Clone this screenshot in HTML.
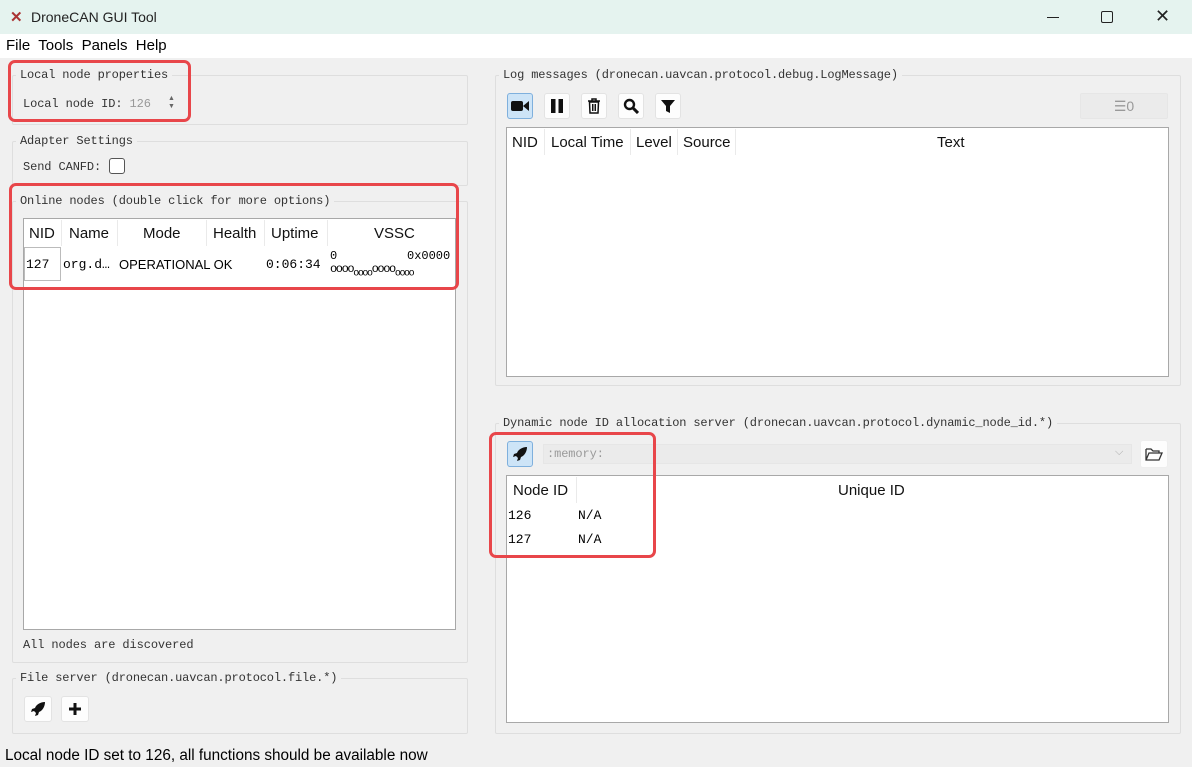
<!DOCTYPE html>
<html><head><meta charset="utf-8"><style>
*{box-sizing:border-box;margin:0;padding:0}
body{width:1192px;height:767px;background:#f0f0f0;position:relative;overflow:hidden;font-family:"Liberation Sans",sans-serif;color:#000}
.a{position:absolute}
.mono{font-family:"Liberation Mono","DejaVu Sans Mono",monospace;font-size:12px;letter-spacing:-0.1px;color:#333}
.grp{position:absolute;border:1px solid #dedede;border-radius:2px}
.gt{position:absolute;background:#f0f0f0;padding:0 4px;font-family:"Liberation Mono",monospace;font-size:12px;letter-spacing:-0.15px;color:#333;white-space:nowrap}
.tbl{position:absolute;background:#fff;border:1px solid #a8a8a8}
.hd{position:absolute;font-size:15px;color:#111;white-space:nowrap}
.sep{position:absolute;width:1px;background:#eaeaea}
.btn{position:absolute;width:26px;height:26px;background:#fdfdfd;border:1px solid #e3e3e3;border-radius:3px;display:flex;align-items:center;justify-content:center}
.sel{background:#cde4f7;border-color:#7fb0dd}
.red{position:absolute;border:3px solid #e8464a;border-radius:7px}
.cell{position:absolute;font-family:"Liberation Mono",monospace;font-size:13px;white-space:nowrap}
</style></head><body>
<div class="a" style="left:0;top:0;width:1192px;height:34px;background:#e5f3ef"></div>
<div class="a" style="left:10px;top:8px;font-size:15px;color:#a33;font-weight:bold">✕</div>
<div class="a" style="left:31px;top:9px;font-size:14px;color:#222">DroneCAN GUI Tool</div>
<div class="a" style="left:1047px;top:17px;width:12px;height:1px;background:#222"></div>
<div class="a" style="left:1101px;top:11px;width:12px;height:12px;border:1px solid #222;border-radius:2px"></div>
<div class="a" style="left:1155px;top:6px;font-size:18px;color:#222">✕</div>
<div class="a" style="left:0;top:34px;width:1192px;height:24px;background:#fff"></div>
<div class="a" style="left:6px;top:37px;font-size:15px">File&nbsp; Tools&nbsp; Panels&nbsp; Help</div>

<div class="grp" style="left:12px;top:75px;width:456px;height:50px"></div>
<div class="gt" style="left:16px;top:68px">Local node properties</div>
<div class="a mono" style="left:23px;top:97px">Local node ID: <span style="color:#999">126</span></div>
<div class="a" style="left:168px;top:95px;font-size:7px;color:#666;line-height:8px">▲<br>▼</div>

<div class="grp" style="left:12px;top:141px;width:456px;height:45px"></div>
<div class="gt" style="left:16px;top:134px">Adapter Settings</div>
<div class="a mono" style="left:23px;top:160px">Send CANFD:</div>
<div class="a" style="left:109px;top:158px;width:16px;height:16px;border:1px solid #555;border-radius:3px;background:#fff"></div>

<div class="grp" style="left:12px;top:201px;width:456px;height:462px"></div>
<div class="gt" style="left:16px;top:194px">Online nodes (double click for more options)</div>
<div class="tbl" style="left:23px;top:218px;width:433px;height:412px"></div>
<div class="hd" style="left:29px;top:225px">NID</div>
<div class="hd" style="left:69px;top:225px">Name</div>
<div class="hd" style="left:143px;top:225px">Mode</div>
<div class="hd" style="left:213px;top:225px">Health</div>
<div class="hd" style="left:271px;top:225px">Uptime</div>
<div class="hd" style="left:374px;top:225px">VSSC</div>
<div class="sep" style="left:61px;top:220px;height:26px"></div>
<div class="sep" style="left:117px;top:220px;height:26px"></div>
<div class="sep" style="left:206px;top:220px;height:26px"></div>
<div class="sep" style="left:264px;top:220px;height:26px"></div>
<div class="sep" style="left:327px;top:220px;height:26px"></div>
<div class="a" style="left:24px;top:247px;width:37px;height:34px;border:1px solid #bbb"></div>
<div class="cell" style="left:26px;top:257px">127</div>
<div class="cell" style="left:63px;top:257px">org.d…</div>
<div class="cell" style="left:119px;top:257px;font-family:'Liberation Sans',sans-serif;font-size:13px">OPERATIONAL OK</div>
<div class="cell" style="left:266px;top:257px">0:06:34</div>
<div class="cell" style="left:330px;top:249px;font-size:12px">0</div>
<div class="cell" style="left:407px;top:249px;font-size:12px">0x0000</div>
<div class="cell" style="left:330px;top:262px;font-size:12px;letter-spacing:-1.4px">oooo<sub>oooo</sub>oooo<sub>oooo</sub></div>
<div class="a mono" style="left:23px;top:638px">All nodes are discovered</div>

<div class="grp" style="left:12px;top:678px;width:456px;height:56px"></div>
<div class="gt" style="left:16px;top:671px">File server (dronecan.uavcan.protocol.file.*)</div>
<div class="btn" style="left:24px;top:696px;width:28px;height:26px"><svg width="16" height="16" viewBox="0 0 16 16"><path d="M15 1C10 1 6 4 5 7L2 8 1 11 4 10 6 12 5 15 8 14 9 11C12 10 15 6 15 1Z" fill="#111"/></svg></div>
<div class="btn" style="left:61px;top:696px;width:28px;height:26px"><svg width="14" height="14"><path d="M7 1V13M1 7H13" stroke="#111" stroke-width="3"/></svg></div>

<div class="grp" style="left:495px;top:75px;width:686px;height:311px"></div>
<div class="gt" style="left:499px;top:68px">Log messages (dronecan.uavcan.protocol.debug.LogMessage)</div>
<div class="btn sel" style="left:507px;top:93px"><svg width="18" height="12"><rect x="0" y="1" width="12" height="10" rx="2" fill="#111"/><path d="M12 6 18 1V11Z" fill="#111"/></svg></div>
<div class="btn" style="left:544px;top:93px"><svg width="14" height="14"><rect x="1" y="0" width="4.5" height="14" fill="#111"/><rect x="8.5" y="0" width="4.5" height="14" fill="#111"/></svg></div>
<div class="btn" style="left:581px;top:93px"><svg width="14" height="16"><path d="M1 3H13M5 3V1H9V3M2.5 4H11.5L11 15H3Z" stroke="#111" stroke-width="1.5" fill="none"/><path d="M5.5 6V13M7 6V13M8.5 6V13" stroke="#111"/></svg></div>
<div class="btn" style="left:618px;top:93px"><svg width="16" height="16"><circle cx="6.5" cy="6.5" r="4.5" stroke="#111" stroke-width="2.4" fill="none"/><path d="M10 10 15 15" stroke="#111" stroke-width="3"/></svg></div>
<div class="btn" style="left:655px;top:93px"><svg width="14" height="14"><path d="M0 1H14L9 7V14L5 12V7Z" fill="#111"/></svg></div>
<div class="a" style="left:1080px;top:93px;width:88px;height:26px;background:#ebebeb;border:1px solid #e6e6e6;border-radius:2px;color:#999;font-size:14px;text-align:center;line-height:24px">☰0</div>
<div class="tbl" style="left:506px;top:127px;width:663px;height:250px"></div>
<div class="hd" style="left:512px;top:134px">NID</div>
<div class="hd" style="left:551px;top:134px">Local Time</div>
<div class="hd" style="left:636px;top:134px">Level</div>
<div class="hd" style="left:683px;top:134px">Source</div>
<div class="hd" style="left:937px;top:134px">Text</div>
<div class="sep" style="left:544px;top:129px;height:26px"></div>
<div class="sep" style="left:630px;top:129px;height:26px"></div>
<div class="sep" style="left:677px;top:129px;height:26px"></div>
<div class="sep" style="left:735px;top:129px;height:26px"></div>

<div class="grp" style="left:495px;top:423px;width:686px;height:311px"></div>
<div class="gt" style="left:499px;top:416px">Dynamic node ID allocation server (dronecan.uavcan.protocol.dynamic_node_id.*)</div>
<div class="btn sel" style="left:507px;top:441px"><svg width="16" height="16" viewBox="0 0 16 16"><path d="M15 1C10 1 6 4 5 7L2 8 1 11 4 10 6 12 5 15 8 14 9 11C12 10 15 6 15 1Z" fill="#111"/></svg></div>
<div class="a" style="left:543px;top:444px;width:589px;height:20px;background:#ebebeb;border:1px solid #e6e6e6"></div>
<div class="a mono" style="left:547px;top:447px;color:#999;font-size:12px">:memory:</div>
<div class="a" style="left:1115px;top:446px;color:#aaa;font-size:11px">⌵</div>
<div class="btn" style="left:1140px;top:440px;width:28px;height:28px;border-color:#eee"><svg width="18" height="14"><path d="M1 2H6L8 4H14V6M1 2V13H14L17 6H4L1 13" stroke="#333" stroke-width="1.3" fill="none"/></svg></div>
<div class="tbl" style="left:506px;top:475px;width:663px;height:248px"></div>
<div class="hd" style="left:513px;top:482px">Node ID</div>
<div class="hd" style="left:838px;top:482px">Unique ID</div>
<div class="sep" style="left:576px;top:477px;height:26px"></div>
<div class="cell" style="left:508px;top:508px">126</div>
<div class="cell" style="left:578px;top:508px">N/A</div>
<div class="cell" style="left:508px;top:532px">127</div>
<div class="cell" style="left:578px;top:532px">N/A</div>

<div class="a" style="left:5px;top:747px;font-size:15.3px">Local node ID set to 126, all functions should be available now</div>

<div class="red" style="left:8px;top:60px;width:183px;height:62px"></div>
<div class="red" style="left:9px;top:183px;width:450px;height:107px"></div>
<div class="red" style="left:489px;top:432px;width:167px;height:126px"></div>
</body></html>
